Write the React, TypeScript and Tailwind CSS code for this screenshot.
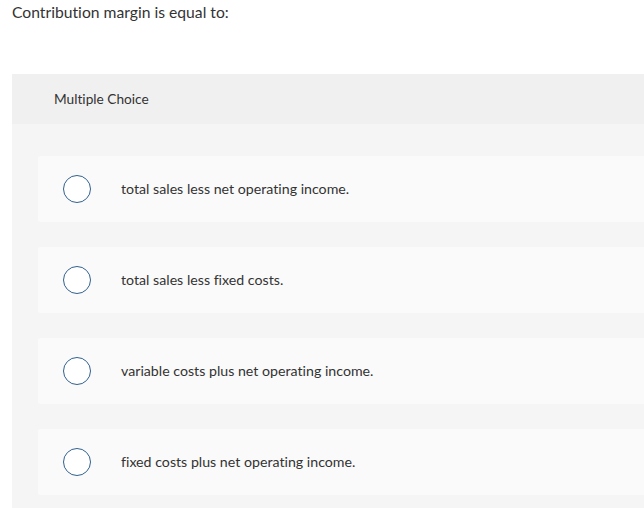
const options = [
  'total sales less net operating income.',
  'total sales less fixed costs.',
  'variable costs plus net operating income.',
  'fixed costs plus net operating income.',
]

export default function App() {
  return (
    <div className="min-h-[508px] bg-white font-['Lato',sans-serif] text-[#333] [font-variant-ligatures:none]">
      <p className="pl-3 pt-[2px] text-[15.7px] leading-5">Contribution margin is equal to:</p>

      <div className="ml-3 mt-[52px]">
        {/* Header */}
        <div className="flex h-[50px] items-center bg-[#f0f0f0] pl-[42px] text-[13.7px]">
          Multiple Choice
        </div>

        {/* Options */}
        <div className="flex flex-col gap-[25px] bg-[#f5f5f5] pb-[13px] pl-[26px] pt-8">
          {options.map((opt) => (
            <div key={opt} className="flex h-[66px] items-center rounded-l-[3px] bg-[#fafafa]">
              <span className="ml-[25px] h-[28px] w-[28px] shrink-0 rounded-full border-[1.5px] border-[#30618f] bg-white" />
              <span className="ml-[30px] text-[14.2px]">{opt}</span>
            </div>
          ))}
        </div>
      </div>
    </div>
  )
}
